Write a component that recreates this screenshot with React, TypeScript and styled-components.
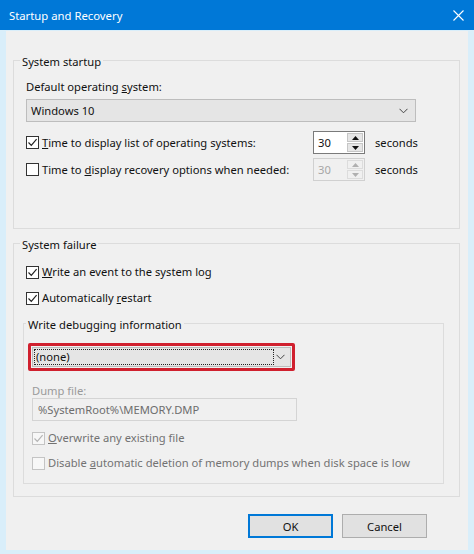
import React from "react";
import styled, { createGlobalStyle } from "styled-components";

const GlobalStyle = createGlobalStyle`
  html, body {
    margin: 0;
    padding: 0;
    background: #d9eefa;
  }
  body {
    font-family: "Noto Sans", "Open Sans", sans-serif;
    font-size: 11.2px;
    color: #111;
  }
`;

const CheckMark: React.FC<{ color: string }> = ({ color }) => (
  <svg width="11" height="11" viewBox="0 0 11 11">
    <path d="M1.5 5.5 L4.3 8.4 L9.6 2.2" fill="none" stroke={color} strokeWidth="1.2" />
  </svg>
);

const Chevron: React.FC = () => (
  <svg width="9" height="6" viewBox="0 0 9 6">
    <path d="M0.5 0.8 L4.5 4.8 L8.5 0.8" fill="none" stroke="#444" strokeWidth="1" />
  </svg>
);

const CheckBox: React.FC<{ checked?: boolean; disabled?: boolean }> = ({ checked, disabled }) => (
  <Box $disabled={disabled}>{checked && <CheckMark color={disabled ? "#b4b4b4" : "#222"} />}</Box>
);

const SpinBox: React.FC<{ value: string; disabled?: boolean }> = ({ value, disabled }) => (
  <Spin $disabled={disabled}>
    <SpinValue>{value}</SpinValue>
    <SpinButtons>
      <SpinButton $disabled={disabled}>
        <svg width="7" height="4" viewBox="0 0 7 4">
          <path d="M0 4 L3.5 0 L7 4 Z" fill={disabled ? "#b0b0b0" : "#111"} />
        </svg>
      </SpinButton>
      <SpinButton $disabled={disabled}>
        <svg width="7" height="4" viewBox="0 0 7 4">
          <path d="M0 0 L3.5 4 L7 0 Z" fill={disabled ? "#b0b0b0" : "#111"} />
        </svg>
      </SpinButton>
    </SpinButtons>
  </Spin>
);

const App: React.FC = () => (
  <>
    <GlobalStyle />
    <Window>
      <TitleBar>
        <span>Startup and Recovery</span>
        <svg width="11" height="11" viewBox="0 0 11 11">
          <path d="M0.5 0.5 L10.5 10.5 M10.5 0.5 L0.5 10.5" stroke="#fff" strokeWidth="1.1" />
        </svg>
      </TitleBar>
      <Client>
        <Group $height={169}>
          <Caption>System startup</Caption>
          <Label $top={9}>
            Default operating <u>s</u>ystem:
          </Label>
          <Select $width={390} $height={23}>
            <SelectText>Windows 10</SelectText>
            <Chevron />
          </Select>
          <TimeRow $top={9}>
            <CheckRow>
              <CheckBox checked />
              <span>
                <u>T</u>ime to display list of operating systems:
              </span>
            </CheckRow>
            <SpinBox value="30" />
            <Seconds>seconds</Seconds>
          </TimeRow>
          <TimeRow $top={4}>
            <CheckRow>
              <CheckBox />
              <span>
                Time to <u>d</u>isplay recovery options when needed:
              </span>
            </CheckRow>
            <SpinBox value="30" disabled />
            <Seconds>seconds</Seconds>
          </TimeRow>
        </Group>

        <Group $height={254} $top={14}>
          <Caption>System failure</Caption>
          <CheckRow $top={11}>
            <CheckBox checked />
            <span>
              <u>W</u>rite an event to the system log
            </span>
          </CheckRow>
          <CheckRow $top={10}>
            <CheckBox checked />
            <span>
              Automatically <u>r</u>estart
            </span>
          </CheckRow>
          <SubGroup>
            <Caption>Write debugging information</Caption>
            <Highlight>
              <Select $width={259} $height={20} $focused>
                <FocusRect>(none)</FocusRect>
                <Chevron />
              </Select>
            </Highlight>
            <DimLabel>Dump file:</DimLabel>
            <TextBox>%SystemRoot%\MEMORY.DMP</TextBox>
            <CheckRow $top={9} $dim>
              <CheckBox checked disabled />
              <span>
                <u>O</u>verwrite any existing file
              </span>
            </CheckRow>
            <CheckRow $top={9} $dim>
              <CheckBox disabled />
              <span>
                Disable <u>a</u>utomatic deletion of memory dumps when disk space is low
              </span>
            </CheckRow>
          </SubGroup>
        </Group>

        <ButtonBar>
          <Button $primary>OK</Button>
          <Button>Cancel</Button>
        </ButtonBar>
      </Client>
    </Window>
  </>
);

const Window = styled.div`
  width: 474px;
  height: 554px;
  display: flex;
  flex-direction: column;
  background: #d9eefa;
  overflow: hidden;
`;

const TitleBar = styled.div`
  height: 30px;
  flex: none;
  display: flex;
  align-items: center;
  justify-content: space-between;
  padding: 0 10px 0 9px;
  background: #0078d7;
  color: #fff;
  font-size: 11.3px;
`;

const Client = styled.div`
  flex: 1;
  margin: 1px 6px 4px 6px;
  padding: 29px 8px 0 7px;
  background: #f0f0f0;
  display: flex;
  flex-direction: column;
`;

const Group = styled.div<{ $height: number; $top?: number }>`
  height: ${(p) => p.$height}px;
  margin-top: ${(p) => p.$top || 0}px;
  box-sizing: border-box;
  border: 1px solid #dcdcdc;
  padding-left: 12px;
  display: flex;
  flex-direction: column;
  flex: none;
`;

const SubGroup = styled.div`
  width: 421px;
  height: 161px;
  box-sizing: border-box;
  margin: 17px 0 0 -3px;
  border: 1px solid #dcdcdc;
  padding-left: 8px;
  display: flex;
  flex-direction: column;
`;

const Caption = styled.div`
  align-self: flex-start;
  margin: -7px 0 0 -6px;
  padding: 0 2px;
  line-height: 16px;
  background: #f0f0f0;
`;

const Label = styled.div<{ $top?: number }>`
  margin-top: ${(p) => p.$top || 0}px;
  line-height: 16px;
  margin-bottom: 4px;
`;

const DimLabel = styled.div`
  margin-top: 12px;
  line-height: 15px;
  color: #9a9a9a;
`;

const Select = styled.div<{ $width: number; $height: number; $focused?: boolean }>`
  width: ${(p) => p.$width}px;
  height: ${(p) => p.$height}px;
  box-sizing: border-box;
  display: flex;
  align-items: center;
  justify-content: space-between;
  padding: 0 ${(p) => (p.$focused ? 5 : 7)}px 0 ${(p) => (p.$focused ? 1 : 4)}px;
  background: #e5e5e5;
  border: 1px solid #bdbdbd;
`;

const SelectText = styled.span`
  line-height: 16px;
`;

const FocusRect = styled.span`
  width: 240px;
  height: 16px;
  box-sizing: border-box;
  padding-left: 1px;
  line-height: 14px;
  border: 1px dotted #222;
`;

const Highlight = styled.div`
  align-self: flex-start;
  margin: 10px 0 0 -4px;
  padding: 1px;
  border: 3px solid #d0202e;
  border-radius: 2px;
`;

const TextBox = styled.div`
  width: 265px;
  height: 23px;
  box-sizing: border-box;
  padding-left: 5px;
  line-height: 21px;
  color: #6d6d6d;
  border: 1px solid #d4d4d4;
`;

const TimeRow = styled.div<{ $top: number }>`
  margin-top: ${(p) => p.$top}px;
  display: grid;
  grid-template-columns: 287px 52px auto;
  align-items: center;
`;

const CheckRow = styled.div<{ $top?: number; $dim?: boolean }>`
  margin-top: ${(p) => p.$top || 0}px;
  display: flex;
  align-items: center;
  gap: 3px;
  line-height: 16px;
  color: ${(p) => (p.$dim ? "#727272" : "inherit")};
`;

const Box = styled.span<{ $disabled?: boolean }>`
  width: 13px;
  height: 13px;
  box-sizing: border-box;
  flex: none;
  display: flex;
  align-items: center;
  justify-content: center;
  background: ${(p) => (p.$disabled ? "#f7f7f7" : "#fff")};
  border: 1px solid ${(p) => (p.$disabled ? "#c4c4c4" : "#333")};
`;

const Spin = styled.div<{ $disabled?: boolean }>`
  height: 23px;
  box-sizing: border-box;
  display: flex;
  align-items: center;
  justify-content: space-between;
  padding: 0 1px 0 4px;
  background: ${(p) => (p.$disabled ? "#f0f0f0" : "#fff")};
  color: ${(p) => (p.$disabled ? "#a6a6a6" : "#111")};
  border: 1px solid ${(p) => (p.$disabled ? "#d0d0d0" : "#7a7a7a")};
`;

const SpinValue = styled.span`
  line-height: 16px;
`;

const SpinButtons = styled.div`
  display: flex;
  flex-direction: column;
  gap: 1px;
`;

const SpinButton = styled.div<{ $disabled?: boolean }>`
  width: 16px;
  height: 9px;
  box-sizing: border-box;
  display: flex;
  align-items: center;
  justify-content: center;
  background: ${(p) => (p.$disabled ? "#f0f0f0" : "#e6e6e6")};
  border: 1px solid ${(p) => (p.$disabled ? "#dcdcdc" : "#c6c6c6")};
`;

const Seconds = styled.span`
  margin-left: 10px;
`;

const ButtonBar = styled.div`
  margin-top: 17px;
  padding-right: 33px;
  display: flex;
  justify-content: flex-end;
  gap: 9px;
`;

const Button = styled.div<{ $primary?: boolean }>`
  width: 85px;
  height: 24px;
  box-sizing: border-box;
  display: flex;
  align-items: center;
  justify-content: center;
  background: #e1e1e1;
  border: ${(p) => (p.$primary ? "2px solid #0078d7" : "1px solid #adadad")};
`;

export default App;
